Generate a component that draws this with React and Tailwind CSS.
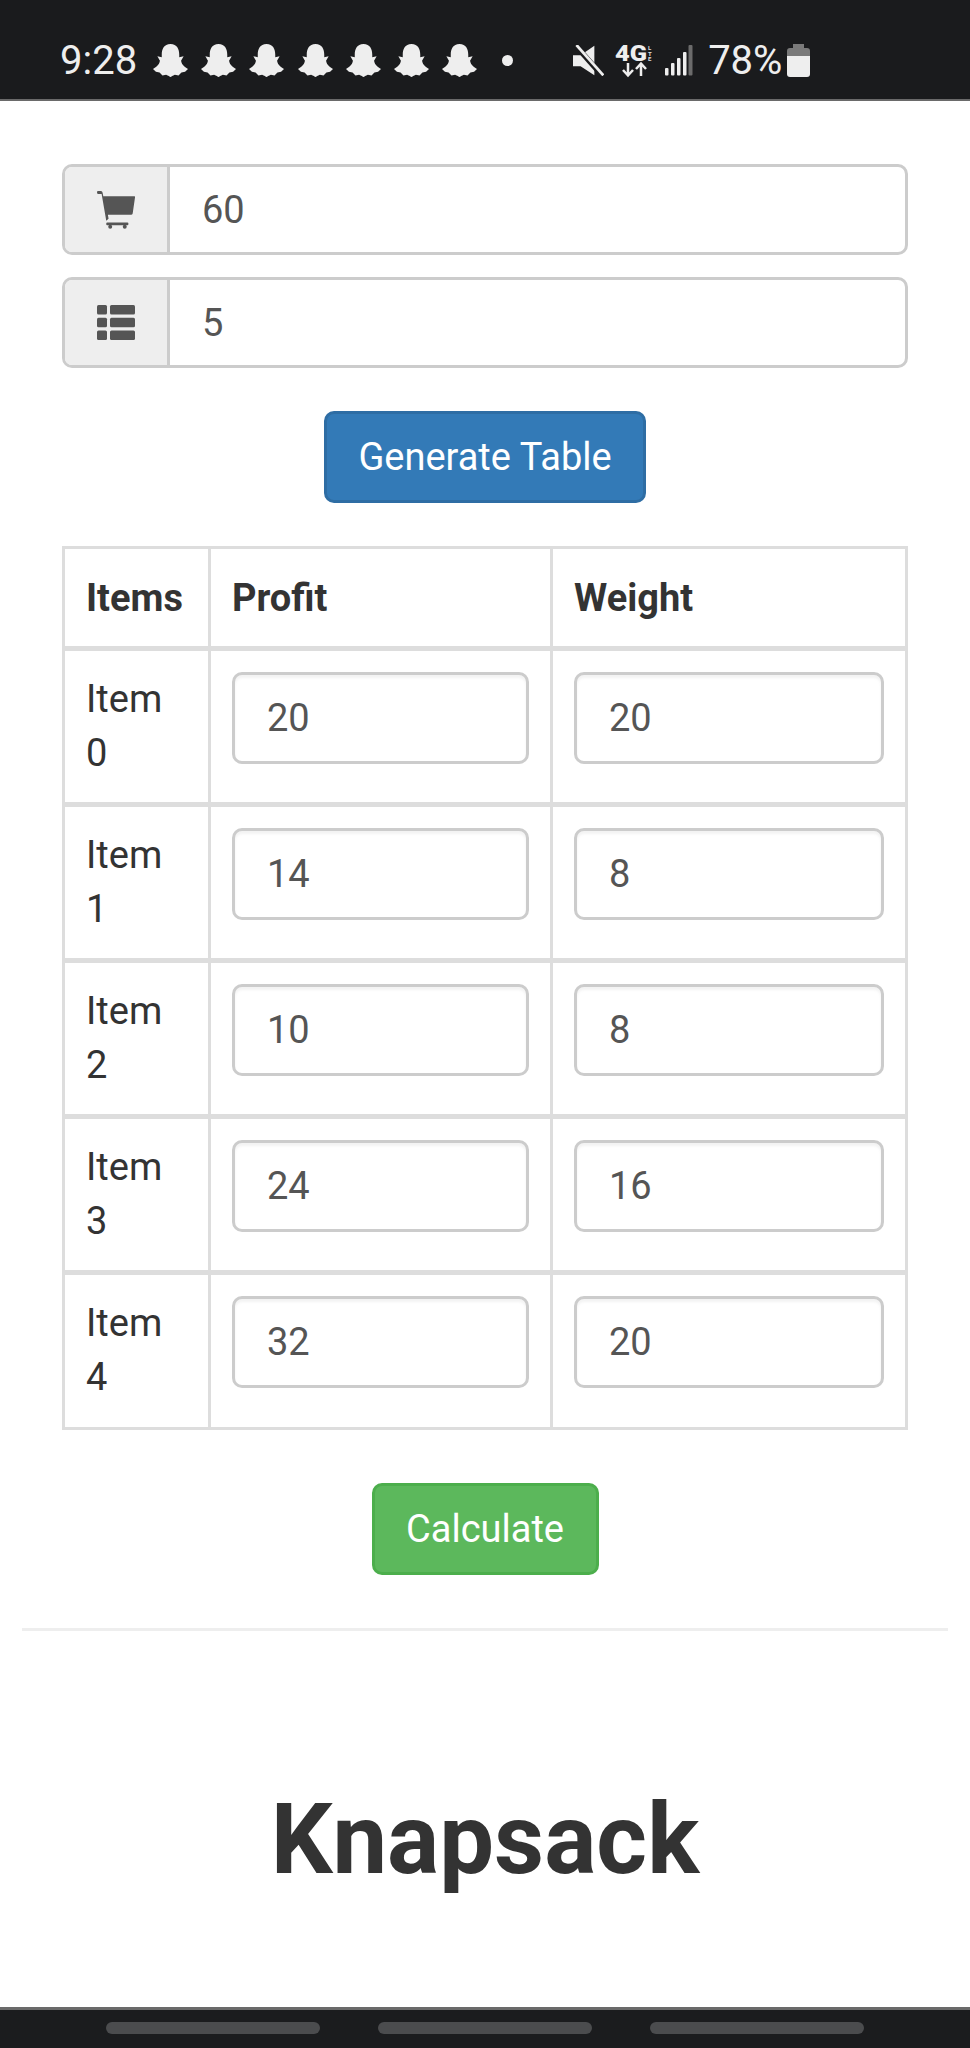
const rows = [
  ["Item 0", "20", "20"],
  ["Item 1", "14", "8"],
  ["Item 2", "10", "8"],
  ["Item 3", "24", "16"],
  ["Item 4", "32", "20"],
];

function GhostIcon() {
  return (
    <svg viewBox="0 0 96 90" className="w-[35px] h-[33px] fill-[#eeeeee]">
      <path d="M48 0C66 0 72 14 72 30V36L84 33L77 46C79 58 88 64 96 68L88 76L78 78L70 86L60 84C54 86 50 90 48 90C46 90 42 86 36 84L26 86L18 78L8 76L0 68C8 64 17 58 19 46L12 33L24 36V30C24 14 30 0 48 0Z" />
    </svg>
  );
}

function CartIcon() {
  return (
    <svg viewBox="0 0 115 115" className="w-[38px] h-[38px] fill-[#555555]">
      <path d="M3 0H12Q16 0 17 5L19 16H113Q116 16 115 20L108 68Q107 72 103 72H33L35 84L28 90L14 9H3Q0 9 0 4Q0 0 3 0Z" />
      <rect x="28" y="95" width="67" height="9" rx="3" />
      <circle cx="40" cy="108" r="6" />
      <circle cx="84" cy="108" r="6" />
    </svg>
  );
}

function ListIcon() {
  return (
    <svg viewBox="0 0 38 35" className="w-[38px] h-[35px] fill-[#555555]">
      <rect x="0" y="0" width="10" height="9.5" rx="1.5" />
      <rect x="13" y="0" width="25" height="9.5" rx="1.5" />
      <rect x="0" y="12.7" width="10" height="9.5" rx="1.5" />
      <rect x="13" y="12.7" width="25" height="9.5" rx="1.5" />
      <rect x="0" y="25.4" width="10" height="9.5" rx="1.5" />
      <rect x="13" y="25.4" width="25" height="9.5" rx="1.5" />
    </svg>
  );
}

function MuteIcon() {
  return (
    <svg viewBox="0 0 90 90" className="w-[31px] h-[31px]">
      <path d="M0 30H22L62 2V88L22 62H0Z" fill="#eeeeee" />
      <path d="M6 0L86 90" stroke="#1a1b1d" strokeWidth="16" />
      <path d="M10 0L88 88" stroke="#eeeeee" strokeWidth="8" />
    </svg>
  );
}

function LteIcon() {
  return (
    <svg viewBox="0 0 42 32" className="w-[42px] h-[32px] overflow-visible">
      <text x="0" y="16" fontFamily="Roboto, sans-serif" fontWeight="900" fontSize="22" textLength="32" lengthAdjust="spacingAndGlyphs" fill="#eeeeee">4G</text>
      <text x="33" y="5" fontFamily="Roboto, sans-serif" fontWeight="700" fontSize="6" fill="#dddddd">L</text>
      <text x="33" y="10.5" fontFamily="Roboto, sans-serif" fontWeight="700" fontSize="6" fill="#dddddd">T</text>
      <text x="33" y="16" fontFamily="Roboto, sans-serif" fontWeight="700" fontSize="6" fill="#dddddd">E</text>
      <path d="M13 18V30M8 25L13 30.5L18 25" stroke="#eeeeee" strokeWidth="2.5" fill="none" />
      <path d="M26 31V19M21 24L26 18.5L31 24" stroke="#eeeeee" strokeWidth="2.5" fill="none" />
    </svg>
  );
}

function SignalIcon() {
  return (
    <svg viewBox="0 0 28 31" className="w-[28px] h-[31px] fill-[#eeeeee]">
      <rect x="0" y="23" width="3.5" height="7.5" rx="1" />
      <rect x="6" y="18" width="3.5" height="12.5" rx="1" />
      <rect x="12" y="13" width="3.5" height="17.5" rx="1" />
      <rect x="18" y="7" width="3.5" height="23.5" rx="1" />
      <rect x="23.5" y="0" width="4" height="30.5" rx="1" fill="#6b6b6b" />
    </svg>
  );
}

function BatteryIcon() {
  return (
    <svg viewBox="0 0 23 33" className="w-[23px] h-[33px]">
      <path d="M6 0H17V4H20Q23 4 23 7V12H0V7Q0 4 3 4H6Z" fill="#7a7a7a" />
      <path d="M0 12H23V30Q23 33 20 33H3Q0 33 0 30Z" fill="#eeeeee" />
    </svg>
  );
}

function StatusBar() {
  return (
    <div className="h-[101px] shrink-0 bg-[#1a1b1d] border-b-2 border-[#6a6a6a] flex items-center pl-[60px] pt-[22px] text-[#eeeeee] text-[40px]">
      <span className="w-[76px]">9:28</span>
      <div className="flex gap-[13.2px] ml-[17px]">
        {[0, 1, 2, 3, 4, 5, 6].map((i) => (
          <GhostIcon key={i} />
        ))}
      </div>
      <span className="w-[11px] h-[11px] rounded-full bg-[#eeeeee] ml-[25px]" />
      <div className="ml-[60px]"><MuteIcon /></div>
      <div className="ml-[11px]"><LteIcon /></div>
      <div className="ml-[8px]"><SignalIcon /></div>
      <span className="ml-[15px] w-[75px]">78%</span>
      <div className="ml-[4px]"><BatteryIcon /></div>
    </div>
  );
}

function AddonInput({ icon, value }) {
  return (
    <div className="flex h-[91px] border-[3px] border-[#cccccc] rounded-[10px] overflow-hidden">
      <div className="w-[105px] bg-[#eeeeee] border-r-[3px] border-[#cccccc] flex items-center justify-center">
        {icon}
      </div>
      <div className="flex-1 flex items-center pl-[32px] text-[#555555]">{value}</div>
    </div>
  );
}

function CellInput({ value }) {
  return (
    <div className="h-[92px] border-[3px] border-[#cccccc] rounded-[10px] flex items-center pl-[32px] text-[#555555] shadow-[inset_0_3px_3px_rgba(0,0,0,0.05)]">
      {value}
    </div>
  );
}

export default function App() {
  return (
    <div className="w-[970px] h-[2048px] flex flex-col overflow-hidden bg-white text-[#333333] font-['Roboto',sans-serif] text-[38px] leading-[54px]">
      <StatusBar />

      <main className="flex-1 px-[22px] pt-[63px]">
        <div className="px-[40px] flex flex-col gap-[22px]">
          <AddonInput icon={<CartIcon />} value="60" />
          <AddonInput icon={<ListIcon />} value="5" />
        </div>

        <div className="flex justify-center mt-[43px]">
          <button className="w-[322px] h-[92px] bg-[#337ab7] border-[3px] border-[#2e6da4] rounded-[10px] text-white">
            Generate Table
          </button>
        </div>

        <div className="px-[40px] mt-[43px]">
          <table className="w-full table-fixed border-collapse">
            <colgroup>
              <col className="w-[146px]" />
              <col className="w-[342px]" />
              <col />
            </colgroup>
            <thead>
              <tr>
                <th className="border-[3px] border-b-[5px] border-[#dddddd] h-[101px] px-[21px] text-left font-bold">Items</th>
                <th className="border-[3px] border-b-[5px] border-[#dddddd] px-[21px] text-left font-bold">Profit</th>
                <th className="border-[3px] border-b-[5px] border-[#dddddd] px-[21px] text-left font-bold">Weight</th>
              </tr>
            </thead>
            <tbody>
              {rows.map((row, i) => (
                <tr key={row[0]} className={i < 4 ? "border-b-[5px] border-[#dddddd]" : "border-b-[3px] border-[#dddddd]"}>
                  <td className={i < 4 ? "border-x-[3px] border-[#dddddd] px-[21px] pt-[21px] pb-[22px] align-top" : "border-x-[3px] border-[#dddddd] px-[21px] pt-[21px] pb-[23px] align-top"}>{row[0]}</td>
                  <td className="border-x-[3px] border-[#dddddd] px-[21px] pt-[21px] pb-[22px] align-top"><CellInput value={row[1]} /></td>
                  <td className="border-x-[3px] border-[#dddddd] px-[21px] pt-[21px] pb-[22px] align-top"><CellInput value={row[2]} /></td>
                </tr>
              ))}
            </tbody>
          </table>
        </div>

        <div className="flex justify-center mt-[53px]">
          <button className="w-[227px] h-[92px] bg-[#5cb85c] border-[3px] border-[#4cae4c] rounded-[10px] text-white">
            Calculate
          </button>
        </div>

        <hr className="mt-[53px] border-t-[3px] border-[#eeeeee]" />

        <h1 className="mt-[157px] text-center text-[97.5px] leading-[104px] font-bold">Knapsack</h1>
      </main>

      <div className="h-[41px] shrink-0 bg-[#1b1c1e] border-t-[3px] border-[#6a6a6a] flex pt-[12px] pl-[106px] gap-[58px]">
        <div className="w-[214px] h-[12px] rounded-full bg-[#4b4c4e]" />
        <div className="w-[214px] h-[12px] rounded-full bg-[#4b4c4e]" />
        <div className="w-[214px] h-[12px] rounded-full bg-[#4b4c4e]" />
      </div>
    </div>
  );
}
